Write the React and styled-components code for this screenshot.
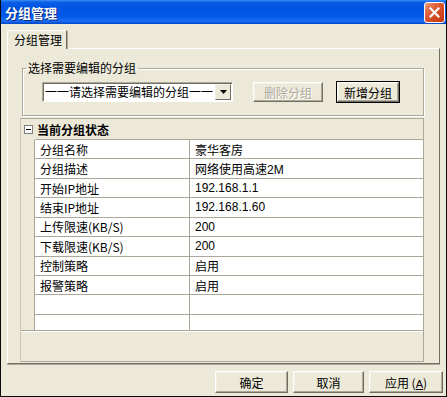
import React from 'react'
import styled, { createGlobalStyle } from 'styled-components'

const GlobalStyle = createGlobalStyle`
  html, body {
    margin: 0;
    padding: 0;
    background: #ffffff;
  }
  body {
    font-family: "Liberation Sans", "Noto Sans CJK SC", sans-serif;
    font-size: 12px;
    color: #000;
  }
`

const Window = styled.div`
  width: 447px;
  height: 397px;
  box-sizing: border-box;
  display: flex;
  flex-direction: column;
  background: #ECE9D8;
  border: 1px solid #0b0b0b;
  border-top: 0;
  overflow: hidden;
`

const TitleBar = styled.div`
  height: 24px;
  flex: none;
  margin: 0 -1px;
  display: flex;
  align-items: center;
  justify-content: space-between;
  padding: 0 2px 0 5px;
  background: linear-gradient(180deg, #3d8ef8 0%, #0a5fe4 9%, #0054e3 30%, #0057e8 65%, #1b6ef2 88%, #0a52d8 96%, #0040c0 100%);
`

const Title = styled.span`
  color: #fff;
  font-family: "Noto Sans CJK SC", sans-serif;
  font-weight: bold;
  font-size: 13px;
  text-shadow: 1px 1px 0 #0a2a80;
`

const CloseButton = styled.div`
  width: 19px;
  height: 19px;
  border: 1px solid #fff;
  border-radius: 3px;
  background: linear-gradient(135deg, #f0a080 0%, #e0603a 35%, #d0451e 70%, #c0380f 100%);
  display: flex;
  align-items: center;
  justify-content: center;
`

const Body = styled.div`
  flex: 1;
  display: flex;
  flex-direction: column;
  padding: 5px 0 0 6px;
  min-height: 0;
`

const TabStrip = styled.div`
  height: 19px;
  display: flex;
  align-items: flex-end;
`

const Tab = styled.div`
  position: relative;
  z-index: 1;
  width: 60px;
  height: 19px;
  margin-bottom: -1px;
  box-sizing: border-box;
  background: #ECE9D8;
  border-top: 1px solid #fff;
  border-left: 1px solid #fff;
  border-right: 1px solid #716F64;
  box-shadow: 1px 0 0 #ACA899;
  border-radius: 2px 2px 0 0;
  font-family: "Noto Sans CJK SC", sans-serif;
  font-size: 12px;
  line-height: 17px;
  padding-left: 6px;
`

const Panel = styled.div`
  flex: 1;
  display: flex;
  flex-direction: column;
  box-sizing: border-box;
  margin-right: 6px;
  border-top: 1px solid #fff;
  border-left: 1px solid #fff;
  border-right: 1px solid #716F64;
  border-bottom: 1px solid #716F64;
  box-shadow: 0 1px 0 #ACA899;
  padding: 0 15px 1px 12px;
`

const GroupBox = styled.fieldset`
  margin: 12px 0 0 2px;
  padding: 7px 0 13px 0;
  border: 1px solid #ACA899;
  box-shadow: inset 1px 1px 0 #fff, 1px 1px 0 #fff;
`

const Legend = styled.legend`
  margin-left: 3px;
  padding: 0 2px;
  font-family: "Noto Sans CJK SC", sans-serif;
  font-size: 12px;
  line-height: 14px;
`

const Controls = styled.div`
  height: 20px;
  display: flex;
  align-items: center;
  padding-left: 19px;
`

const Combo = styled.div`
  width: 191px;
  height: 20px;
  box-sizing: border-box;
  display: flex;
  align-items: center;
  background: #fff;
  border-top: 1px solid #ACA899;
  border-left: 1px solid #ACA899;
  border-right: 1px solid #fff;
  border-bottom: 1px solid #fff;
  box-shadow: inset 1px 1px 0 #716F64;
  padding: 1px 1px 1px 2px;
`

const ComboText = styled.span`
  flex: 1;
  font-family: "Noto Sans CJK SC", sans-serif;
  font-size: 12px;
  line-height: 16px;
  white-space: nowrap;
  overflow: hidden;
`

const ComboArrow = styled.div`
  width: 16px;
  height: 16px;
  box-sizing: border-box;
  background: #ECE9D8;
  border-top: 1px solid #F1EFE2;
  border-left: 1px solid #F1EFE2;
  border-right: 1px solid #716F64;
  border-bottom: 1px solid #716F64;
  display: flex;
  align-items: center;
  justify-content: center;
`

const Button = styled.button`
  width: ${p => p.w || 73}px;
  height: ${p => p.h || 21}px;
  margin-left: ${p => p.ml || 0}px;
  padding: 0;
  box-sizing: border-box;
  background: #ECE9D8;
  font-family: "Noto Sans CJK SC", sans-serif;
  font-size: 12px;
  color: ${p => (p.disabled ? '#ACA899' : '#000')};
  text-shadow: ${p => (p.disabled ? '1px 1px 0 #fff' : 'none')};
  border-style: solid;
  border-width: 1px;
  border-color: #fff #716F64 #716F64 #fff;
  box-shadow: ${p => (p.$primary ? '0 0 0 1px #000, ' : '')}inset -1px -1px 0 #ACA899, inset 1px 1px 0 #F1EFE2;
  border-radius: 0;
`

const Underline = styled.span`
  text-decoration: underline;
  font-family: "Liberation Sans", sans-serif;
  font-size: 11px;
`

const Grid = styled.div`
  flex: 1;
  margin-top: 2px;
  display: flex;
  flex-direction: column;
  border: 1px solid #ACA899;
  border-left-color: #C8C5B4;
  background: #ECE9D8;
`

const Rows = styled.div`
  height: 211px;
  overflow: hidden;
  border-bottom: 1px solid #ACA899;
  box-shadow: 0 1px 0 #fff;
`

const Row = styled.div`
  height: ${p => (p.$header ? '21px' : '19.43px')};
  display: grid;
  grid-template-columns: 14px 155px 1fr;
  font-family: "Noto Sans CJK SC", sans-serif;
  font-size: 12px;
`

const Margin = styled.div`
  background: #ECE9D8;
  display: flex;
  align-items: center;
  justify-content: center;
  border-right: ${p => (p.$header ? '0' : '1px solid #ACA899')};
`

const Cell = styled.div`
  background: #fff;
  box-sizing: border-box;
  border-bottom: 1px solid #ACA899;
  border-right: ${p => (p.$name ? '1px solid #ACA899' : '0')};
  padding-left: 5px;
  display: flex;
  align-items: center;
  white-space: nowrap;
  font-family: ${p => (p.$latin ? '"Liberation Sans", "Noto Sans CJK SC", sans-serif' : '"Noto Sans CJK SC", sans-serif')};
`

const HeaderCell = styled.div`
  grid-column: span 2;
  background: #ECE9D8;
  border-bottom: 1px solid #ACA899;
  padding-left: 2px;
  display: flex;
  align-items: center;
  font-weight: bold;
`

const MinusBox = styled.div`
  width: 9px;
  height: 9px;
  box-sizing: border-box;
  border: 1px solid #808080;
  background: #fff;
  display: flex;
  align-items: center;
  justify-content: center;
  &::after {
    content: '';
    width: 5px;
    height: 1px;
    background: #000;
  }
`

const HelpPane = styled.div`
  flex: 1;
`

const Footer = styled.div`
  height: 32px;
  flex: none;
  display: flex;
  justify-content: flex-end;
  align-items: flex-start;
  padding: 7px 3px 0 0;
  box-sizing: border-box;
`

const props = [
  ['分组名称', '豪华客房'],
  ['分组描述', '网络使用高速2M'],
  ['开始IP地址', '192.168.1.1'],
  ['结束IP地址', '192.168.1.60'],
  ['上传限速(KB/S)', '200'],
  ['下载限速(KB/S)', '200'],
  ['控制策略', '启用'],
  ['报警策略', '启用'],
  ['', ''],
  ['', ''],
]

export default function App() {
  return (
    <>
      <GlobalStyle />
      <Window>
        <TitleBar>
          <Title>分组管理</Title>
          <CloseButton>
            <svg width="11" height="11" viewBox="0 0 11 11">
              <path d="M1.5 1.5 L9.5 9.5 M9.5 1.5 L1.5 9.5" stroke="#fff" strokeWidth="2.2" strokeLinecap="square" />
            </svg>
          </CloseButton>
        </TitleBar>
        <Body>
          <TabStrip>
            <Tab>分组管理</Tab>
          </TabStrip>
          <Panel>
            <GroupBox>
              <Legend>选择需要编辑的分组</Legend>
              <Controls>
                <Combo>
                  <ComboText>一一请选择需要编辑的分组一一</ComboText>
                  <ComboArrow>
                    <svg width="7" height="4" viewBox="0 0 7 4">
                      <path d="M0 0 H7 L3.5 4 Z" fill="#000" />
                    </svg>
                  </ComboArrow>
                </Combo>
                <Button w={70} h={20} ml={20} disabled>删除分组</Button>
                <Button w={62} h={20} ml={14} $primary>新增分组</Button>
              </Controls>
            </GroupBox>
            <Grid>
              <Rows>
                <Row $header>
                  <Margin $header><MinusBox /></Margin>
                  <HeaderCell>当前分组状态</HeaderCell>
                </Row>
                {props.map(([k, v], i) => (
                  <Row key={i}>
                    <Margin />
                    <Cell $name>{k}</Cell>
                    <Cell $latin>{v}</Cell>
                  </Row>
                ))}
              </Rows>
              <HelpPane />
            </Grid>
          </Panel>
          <Footer>
            <Button w={73} h={22}>确定</Button>
            <Button w={71} h={22} ml={5}>取消</Button>
            <Button w={74} h={22} ml={5}>应用 (<Underline>A</Underline>)</Button>
          </Footer>
        </Body>
      </Window>
    </>
  )
}
